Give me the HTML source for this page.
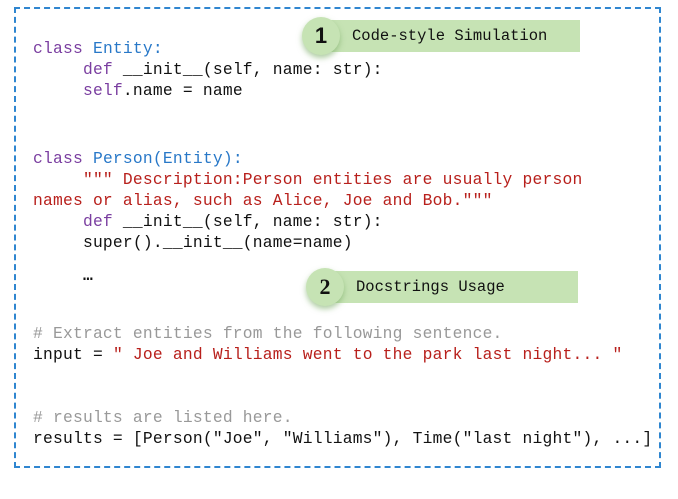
<!DOCTYPE html>
<html><head><meta charset="utf-8"><style>
body{margin:0;width:678px;height:499px;background:#fff;position:relative;overflow:hidden}
.box{position:absolute;left:14px;top:7px;width:647px;height:461px;border:2px dashed #2f86d0;box-sizing:border-box}
.code{position:absolute;left:33px;font-family:"Liberation Mono",monospace;font-size:16.3px;letter-spacing:0.22px;white-space:pre;color:#111;line-height:21px}
.k{color:#7a3ea0}.b{color:#2878c8}.r{color:#b8201c}.g{color:#999}
.lab{position:absolute;background:#c6e3b4;font-family:"Liberation Mono",monospace;font-size:15.5px;color:#111;line-height:32px;box-sizing:border-box}
.c{position:absolute;width:38px;height:38px;border-radius:50%;background:#c6e3b4;box-shadow:0 3px 6px rgba(120,170,100,.6);font:bold 22px "Liberation Sans",sans-serif;text-align:center;line-height:38px;color:#111}
</style></head><body>
<div class="box"></div>
<div class="lab" style="left:330px;top:20px;width:250px;height:32px;padding-left:22px">Code-style Simulation</div>
<div class="c" style="left:302px;top:17px">1</div>
<div class="lab" style="left:334px;top:271px;width:244px;height:32px;padding-left:22px">Docstrings Usage</div>
<div class="c" style="left:306px;top:268px;font-family:'Liberation Serif',serif">2</div>
<div class="code" style="top:38px"><span class="k">class</span> <span class="b">Entity:</span>
     <span class="k">def</span> __init__(self, name: str):
     <span class="k">self</span>.name = name</div>
<div class="code" style="top:148px"><span class="k">class</span> <span class="b">Person(Entity):</span>
     <span class="r">""" Description:Person entities are usually person</span>
<span class="r">names or alias, such as Alice, Joe and Bob."""</span>
     <span class="k">def</span> __init__(self, name: str):
     super().__init__(name=name)</div>
<div class="code" style="top:265px;font-weight:bold">     …</div>
<div class="code" style="top:323px"><span class="g"># Extract entities from the following sentence.</span>
input = <span class="r">" Joe and Williams went to the park last night... "</span></div>
<div class="code" style="top:407px"><span class="g"># results are listed here.</span>
results = [Person("Joe", "Williams"), Time("last night"), ...]</div>
</body></html>
